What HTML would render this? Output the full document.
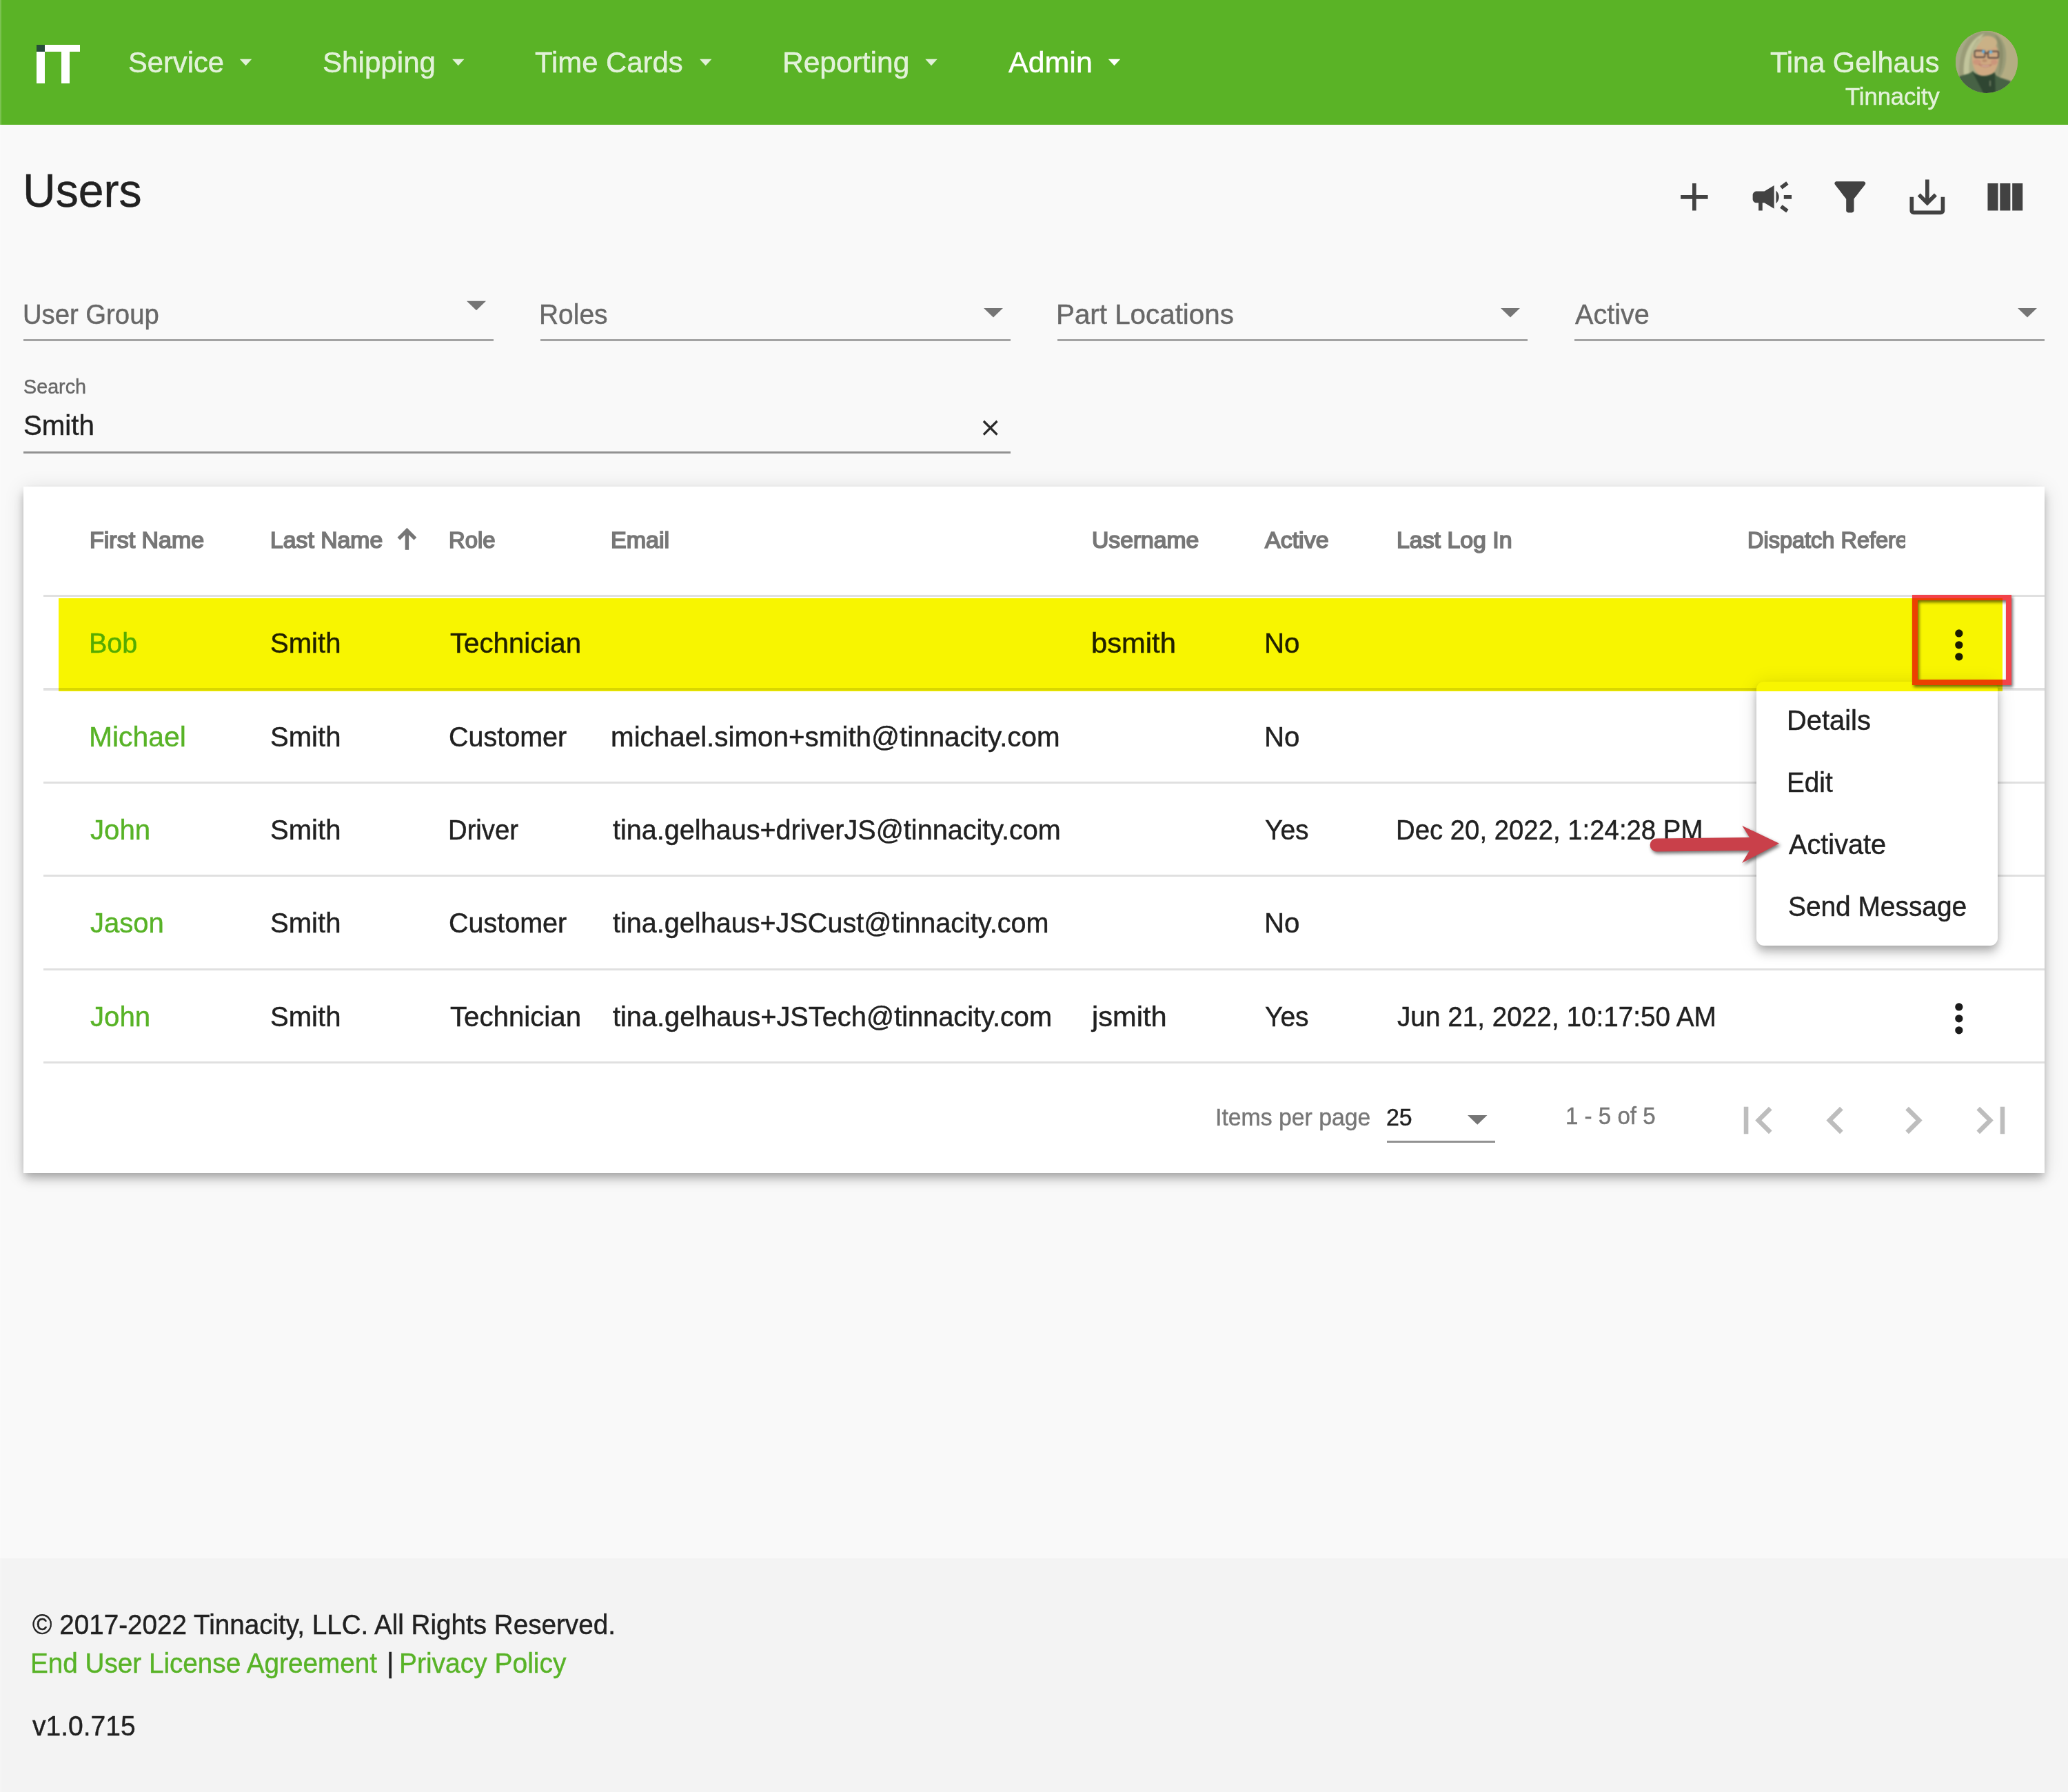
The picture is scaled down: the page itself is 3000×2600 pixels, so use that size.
<!DOCTYPE html>
<html lang="en">
<head>
<meta charset="utf-8">
<title>Users</title>
<style>
html,body{margin:0;padding:0;}
body{width:3000px;height:2600px;overflow:hidden;background:#f9f9f9;font-family:"Liberation Sans",sans-serif;}
#page{position:relative;width:3000px;height:2600px;overflow:hidden;background:#f9f9f9;}
.t{position:absolute;white-space:nowrap;line-height:1em;transform-origin:0 0;font-family:"Liberation Sans",sans-serif;}
.a{position:absolute;}
.ln{position:absolute;background:#e0e0e0;height:3.4px;left:63px;width:2903px;}
.ul{position:absolute;background:#929292;height:2.8px;}
svg{position:absolute;overflow:visible;}
</style>
</head>
<body>
<div id="page">

<!-- header -->
<div class="a" style="left:0;top:0;width:3000px;height:180.8px;background:#5ab326"></div>
<!-- logo -->
<div class="a" style="left:52.7px;top:65.3px;width:12.1px;height:10.1px;background:#264d3a"></div>
<div class="a" style="left:52.7px;top:75.4px;width:12.1px;height:45.5px;background:#fff"></div>
<div class="a" style="left:64.8px;top:65.3px;width:51.2px;height:10.1px;background:#fff"></div>
<div class="a" style="left:89px;top:65.3px;width:11.6px;height:55.6px;background:#fff"></div>
<!-- nav carets -->
<svg style="left:0;top:0" width="3000" height="181">
 <g fill="rgba(255,255,255,.82)">
  <polygon points="347.8,85.8 365.2,85.8 356.50,95.2"/>
  <polygon points="656.1,85.8 673.5,85.8 664.80,95.2"/>
  <polygon points="1015,85.8 1032.4,85.8 1023.70,95.2"/>
  <polygon points="1342.3,85.8 1359.7,85.8 1351.00,95.2"/>
 </g>
 <polygon fill="#fff" points="1607.8,85.8 1625.2,85.8 1616.50,95.2"/>
</svg>
<!-- avatar -->
<div class="a" style="left:2837px;top:44.8px;width:90px;height:90px;border-radius:50%;overflow:hidden;background:#b4ad83">
<svg style="left:0;top:0;filter:blur(1.1px)" width="90" height="90" viewBox="0 0 90 90">
 <g>
  <rect x="-6" y="-6" width="102" height="102" fill="#b4ad83"/>
  <rect x="-6" y="-6" width="34" height="102" fill="#a6aa86"/>
  <path d="M6 78 C2 44 10 10 32 2 C52 -4 70 6 73 30 C74 46 71 58 64 68 L22 74 Z" fill="#9a9c78"/>
  <path d="M12 64 C10 38 18 12 42 3 C30 16 25 34 26 64 Z" fill="#c2c59c"/>
  <path d="M20 66 C18 44 22 22 34 10 C28 26 28 46 30 66 Z" fill="#a9ac86"/>
  <ellipse cx="43" cy="38" rx="19.500" ry="29" fill="#cfa982"/>
  <ellipse cx="46" cy="17" rx="14" ry="10" fill="#cab186"/>
  <path d="M57 5 C72 14 72 46 62 66 C65 46 65 22 57 5Z" fill="#8c8e6b"/>
  <path d="M24 30 C26 18 34 10 44 8 C36 14 30 22 26 36 Z" fill="#b9bb93"/>
  <ellipse cx="31" cy="45" rx="6" ry="4" fill="#cc967b"/>
  <ellipse cx="56" cy="45" rx="5" ry="4" fill="#cc967b"/>
  <g fill="none" stroke="#5b4a42" stroke-width="1.800"><rect x="27.500" y="28.500" width="15" height="9.500" rx="2"/><rect x="47" y="29.500" width="15" height="9.500" rx="2"/><path d="M42.500 32 L47 32.500"/></g>
  <rect x="38.500" y="27.500" width="3.500" height="4.500" fill="#5aaee8"/><rect x="49" y="28.500" width="4" height="4" fill="#62b4e6"/>
  <path d="M33.500 48.500 Q43 55.500 52.500 49 Q43 51.500 33.500 48.500Z" fill="#f1e7dc" stroke="#b46f60" stroke-width="1"/>
  <ellipse cx="42" cy="43" rx="3.500" ry="2" fill="#b98d6c"/>
  <path d="M-4 96 L5 66 C12 63 20 63 25 58 C30 66 46 68 56 60 C58 68 70 68 80 73 L96 96 Z" fill="#476245"/>
  <path d="M24 58 C32 67 48 68 57 60 L58 96 L42 96 C38 82 30 72 24 58Z" fill="#2f4632"/>
  <rect x="49" y="72" width="2" height="8" fill="#6b7a5e"/>
 </g>
</svg>
</div>
<!-- toolbar icons -->
<svg style="left:2423.9px;top:251.8px" width="67.7" height="67.7" viewBox="0 0 24 24" fill="#424242"><path d="M19 13h-6v6h-2v-6H5v-2h6V5h2v6h6v2z"/></svg>
<svg style="left:2536.7px;top:251.8px" width="67.7" height="67.7" viewBox="0 0 24 24" fill="#424242"><path d="M18 11v2h4v-2h-4zm-2 6.610c.96.71 2.210 1.650 3.200 2.390.4-.530.8-1.070 1.200-1.600-.990-.740-2.240-1.680-3.200-2.400-.4.540-.8 1.080-1.200 1.610zM20.400 5.600c-.4-.530-.8-1.070-1.200-1.600-.990.740-2.240 1.680-3.200 2.400.4.530.8 1.070 1.200 1.600.960-.720 2.210-1.650 3.200-2.400zM4 9c-1.100 0-2 .9-2 2v2c0 1.100.9 2 2 2h1v4h2v-4h1l5 3V6L8 9H4zm11.500 3c0-1.330-.580-2.530-1.500-3.350v6.690c.920-.810 1.500-2.010 1.500-3.340z"/></svg>
<svg style="left:2649.5px;top:251.8px" width="67.7" height="67.7" viewBox="0 0 24 24" fill="#424242"><path d="M4.250 5.610C6.270 8.200 10 13 10 13v6c0 .550.450 1 1 1h2c.550 0 1-.450 1-1v-6s3.720-4.800 5.740-7.390A.998.998 0 0 0 18.950 4H5.040c-.830 0-1.300.950-.790 1.610z"/></svg>
<svg style="left:2762.2px;top:251.8px" width="67.7" height="67.7" viewBox="0 0 24 24" fill="#424242"><path d="M19 12v7H5v-7H3v7c0 1.100.9 2 2 2h14c1.100 0 2-.9 2-2v-7h-2zm-6 .670l2.590-2.580L17 11.500l-5 5-5-5 1.410-1.410L11 12.670V3h2v9.670z"/></svg>
<svg style="left:2875px;top:251.8px" width="67.7" height="67.7" viewBox="0 0 24 24" fill="#424242"><path d="M14.670 5v14H9.330V5h5.340zm1 14H21V5h-5.330v14zm-7.340 0V5H3v14h5.330z"/></svg>
<!-- filter underlines + carets -->
<div class="ul" style="left:34px;top:492.2px;width:682px;background:#a3a3a3"></div>
<div class="ul" style="left:784px;top:492.2px;width:682px;background:#a3a3a3"></div>
<div class="ul" style="left:1534px;top:492.2px;width:682px;background:#a3a3a3"></div>
<div class="ul" style="left:2284px;top:492.2px;width:682px;background:#a3a3a3"></div>
<div class="ul" style="left:34px;top:655px;width:1432px;height:3px"></div>
<svg style="left:0;top:400px" width="3000" height="300">
 <g fill="#757575">
  <polygon points="677,36.8 705,36.8 691,50.2"/>
  <polygon points="1427,47 1455,47 1441,60.4"/>
  <polygon points="2177,47 2205,47 2191,60.4"/>
  <polygon points="2927,47 2955,47 2941,60.4"/>
 </g>
 <g stroke="#2a2a2a" stroke-width="3.3" fill="none"><path d="M1426.9 211 L1446.5 230.6 M1446.5 211 L1426.9 230.6"/></g>
</svg>
<!-- card -->
<div class="a" style="left:33.9px;top:706px;width:2932.3px;height:996px;background:#fff;box-shadow:0 5.6px 11.3px -2.8px rgba(0,0,0,.2),0 11.3px 14.1px 0 rgba(0,0,0,.14),0 2.8px 28.2px 0 rgba(0,0,0,.12)"></div>
<div class="ln" style="top:862.8px"></div>
<div class="ln" style="top:998.3px"></div>
<div class="ln" style="top:1133.7px"></div>
<div class="ln" style="top:1269.1px"></div>
<div class="ln" style="top:1404.5px"></div>
<div class="ln" style="top:1539.9px"></div>
<!-- sort arrow -->
<svg style="left:570px;top:760px" width="45" height="45"><g stroke="#757575" stroke-width="5.4" fill="none"><path d="M20.4 37.8 V10.5"/><path d="M8.4 21.6 L20.4 9.600 L32.4 21.6" stroke-linejoin="miter"/></g></svg>
<!-- more_vert icons -->
<svg style="left:2808.4px;top:901.5px" width="67.7" height="67.7" viewBox="0 0 24 24" fill="#1b1b1b"><circle cx="12" cy="6" r="2"/><circle cx="12" cy="12" r="2"/><circle cx="12" cy="18" r="2"/></svg>
<svg style="left:2808px;top:1443.5px" width="67.7" height="67.7" viewBox="0 0 24 24" fill="#1b1b1b"><circle cx="12" cy="6" r="2"/><circle cx="12" cy="12" r="2"/><circle cx="12" cy="18" r="2"/></svg>
<!-- paginator -->
<div class="ul" style="left:2012px;top:1654.9px;width:157px"></div>
<svg style="left:2129.2px;top:1618px" width="29" height="14"><polygon fill="#757575" points="0,0 28.5,0 14.25,13.8"/></svg>
<svg style="left:2509.5px;top:1585.7px" width="79" height="79" viewBox="0 0 24 24" fill="#bdbdbd"><path d="M18.410 16.590L13.820 12l4.590-4.590L17 6l-6 6 6 6zM6 6h2v12H6z"/></svg>
<svg style="left:2623.4px;top:1585.7px" width="79" height="79" viewBox="0 0 24 24" fill="#bdbdbd"><path d="M15.410 7.410L14 6l-6 6 6 6 1.410-1.410L10.830 12z"/></svg>
<svg style="left:2735.500px;top:1585.7px" width="79" height="79" viewBox="0 0 24 24" fill="#bdbdbd"><path d="M10 6L8.590 7.410 13.170 12l-4.580 4.590L10 18l6-6z"/></svg>
<svg style="left:2848.600px;top:1585.7px" width="79" height="79" viewBox="0 0 24 24" fill="#bdbdbd"><path d="M5.590 7.410L10.180 12l-4.590 4.590L7 18l6-6-6-6zM16 6h2v12h-2z"/></svg>
<!-- footer -->
<div class="a" style="left:0;top:2260.8px;width:3000px;height:339.2px;background:#f3f3f3"></div>

<!-- texts -->
<span class="t" style="left:185.92px;top:68.90px;font-size:43.36px;color:rgba(255,255,255,.82);transform:scaleX(0.9610);-webkit-text-stroke:0.45px rgba(255,255,255,.82);">Service</span>
<span class="t" style="left:467.61px;top:68.90px;font-size:43.36px;color:rgba(255,255,255,.82);transform:scaleX(0.9721);-webkit-text-stroke:0.45px rgba(255,255,255,.82);">Shipping</span>
<span class="t" style="left:775.77px;top:68.90px;font-size:43.36px;color:rgba(255,255,255,.82);transform:scaleX(0.9653);-webkit-text-stroke:0.45px rgba(255,255,255,.82);">Time Cards</span>
<span class="t" style="left:1134.51px;top:68.90px;font-size:43.36px;color:rgba(255,255,255,.82);transform:scaleX(0.9801);-webkit-text-stroke:0.45px rgba(255,255,255,.82);">Reporting</span>
<span class="t" style="left:1462.82px;top:68.90px;font-size:43.36px;color:#fff;transform:scaleX(0.9908);-webkit-text-stroke:0.45px #fff;">Admin</span>
<span class="t" style="left:2568.28px;top:68.90px;font-size:43.36px;color:rgba(255,255,255,.82);transform:scaleX(0.9584);-webkit-text-stroke:0.45px rgba(255,255,255,.82);">Tina Gelhaus</span>
<span class="t" style="left:2676.79px;top:123.07px;font-size:34.64px;color:rgba(255,255,255,.82);transform:scaleX(0.9967);-webkit-text-stroke:0.45px rgba(255,255,255,.82);">Tinnacity</span>
<span class="t" style="left:32.69px;top:241.86px;font-size:69.39px;color:#212121;transform:scaleX(0.9528);-webkit-text-stroke:0.45px #212121;">Users</span>
<span class="t" style="left:32.63px;top:435.93px;font-size:40.49px;color:#686868;transform:scaleX(0.9447);-webkit-text-stroke:0.45px #686868;">User Group</span>
<span class="t" style="left:781.98px;top:435.93px;font-size:40.49px;color:#686868;transform:scaleX(0.9613);-webkit-text-stroke:0.45px #686868;">Roles</span>
<span class="t" style="left:1531.87px;top:435.93px;font-size:40.49px;color:#686868;transform:scaleX(0.9963);-webkit-text-stroke:0.45px #686868;">Part Locations</span>
<span class="t" style="left:2285.03px;top:435.93px;font-size:40.49px;color:#686868;transform:scaleX(0.9773);-webkit-text-stroke:0.45px #686868;">Active</span>
<span class="t" style="left:34.13px;top:546.32px;font-size:30.34px;color:#686868;transform:scaleX(0.9473);-webkit-text-stroke:0.45px #686868;">Search</span>
<span class="t" style="left:33.77px;top:597.33px;font-size:40.49px;color:#212121;transform:scaleX(0.9940);-webkit-text-stroke:0.45px #212121;">Smith</span>
<span class="t" style="left:129.79px;top:766.60px;font-size:33.43px;color:#777777;transform:scaleX(1.0170);-webkit-text-stroke:1.7px #777777;">First Name</span>
<span class="t" style="left:391.71px;top:766.60px;font-size:33.43px;color:#777777;transform:scaleX(1.0102);-webkit-text-stroke:1.7px #777777;">Last Name</span>
<span class="t" style="left:651.28px;top:766.60px;font-size:33.43px;color:#777777;transform:scaleX(0.9832);-webkit-text-stroke:1.7px #777777;">Role</span>
<span class="t" style="left:886.39px;top:766.60px;font-size:33.43px;color:#777777;transform:scaleX(1.0193);-webkit-text-stroke:1.7px #777777;">Email</span>
<span class="t" style="left:1583.84px;top:766.60px;font-size:33.43px;color:#777777;transform:scaleX(1.0075);-webkit-text-stroke:1.7px #777777;">Username</span>
<span class="t" style="left:1835.45px;top:766.60px;font-size:33.43px;color:#777777;transform:scaleX(1.0169);-webkit-text-stroke:1.7px #777777;">Active</span>
<span class="t" style="left:2025.90px;top:766.60px;font-size:33.43px;color:#777777;transform:scaleX(1.0134);-webkit-text-stroke:1.7px #777777;">Last Log In</span>
<div style="position:absolute;left:2534.80px;top:756.60px;width:229.00px;height:50.15px;overflow:hidden"><span class="t" style="left:0.31px;top:10px;font-size:33.43px;color:#777777;transform:scaleX(0.9720);font-weight:400;-webkit-text-stroke:1.7px #777777;">Dispatch Reference</span></div>
<span class="t" style="left:128.94px;top:913.13px;font-size:40.49px;color:#58b327;transform:scaleX(0.9764);-webkit-text-stroke:0.45px #58b327;">Bob</span>
<span class="t" style="left:392.47px;top:913.13px;font-size:40.49px;color:#212121;transform:scaleX(0.9900);-webkit-text-stroke:0.45px #212121;">Smith</span>
<span class="t" style="left:652.60px;top:913.13px;font-size:40.49px;color:#212121;transform:scaleX(0.9934);-webkit-text-stroke:0.45px #212121;">Technician</span>
<span class="t" style="left:1582.72px;top:913.13px;font-size:40.49px;color:#212121;transform:scaleX(1.0306);-webkit-text-stroke:0.45px #212121;">bsmith</span>
<span class="t" style="left:1833.68px;top:913.13px;font-size:40.49px;color:#212121;transform:scaleX(0.9957);-webkit-text-stroke:0.45px #212121;">No</span>
<span class="t" style="left:128.83px;top:1048.53px;font-size:40.49px;color:#58b327;transform:scaleX(1.0095);-webkit-text-stroke:0.45px #58b327;">Michael</span>
<span class="t" style="left:392.47px;top:1048.53px;font-size:40.49px;color:#212121;transform:scaleX(0.9900);-webkit-text-stroke:0.45px #212121;">Smith</span>
<span class="t" style="left:651.37px;top:1048.53px;font-size:40.49px;color:#212121;transform:scaleX(0.9755);-webkit-text-stroke:0.45px #212121;">Customer</span>
<span class="t" style="left:886.40px;top:1048.53px;font-size:40.49px;color:#212121;transform:scaleX(0.9972);-webkit-text-stroke:0.45px #212121;">michael.simon+smith@tinnacity.com</span>
<span class="t" style="left:1833.68px;top:1048.53px;font-size:40.49px;color:#212121;transform:scaleX(0.9957);-webkit-text-stroke:0.45px #212121;">No</span>
<span class="t" style="left:131.40px;top:1183.93px;font-size:40.49px;color:#58b327;transform:scaleX(0.9925);-webkit-text-stroke:0.45px #58b327;">John</span>
<span class="t" style="left:392.47px;top:1183.93px;font-size:40.49px;color:#212121;transform:scaleX(0.9900);-webkit-text-stroke:0.45px #212121;">Smith</span>
<span class="t" style="left:650.24px;top:1183.93px;font-size:40.49px;color:#212121;transform:scaleX(0.9450);-webkit-text-stroke:0.45px #212121;">Driver</span>
<span class="t" style="left:888.92px;top:1183.93px;font-size:40.49px;color:#212121;transform:scaleX(0.9775);-webkit-text-stroke:0.45px #212121;">tina.gelhaus+driverJS@tinnacity.com</span>
<span class="t" style="left:1834.62px;top:1183.93px;font-size:40.49px;color:#212121;transform:scaleX(0.9626);-webkit-text-stroke:0.45px #212121;">Yes</span>
<span class="t" style="left:2024.83px;top:1183.93px;font-size:40.49px;color:#212121;transform:scaleX(0.9467);-webkit-text-stroke:0.45px #212121;">Dec 20, 2022, 1:24:28 PM</span>
<span class="t" style="left:131.40px;top:1319.33px;font-size:40.49px;color:#58b327;transform:scaleX(0.9878);-webkit-text-stroke:0.45px #58b327;">Jason</span>
<span class="t" style="left:392.47px;top:1319.33px;font-size:40.49px;color:#212121;transform:scaleX(0.9900);-webkit-text-stroke:0.45px #212121;">Smith</span>
<span class="t" style="left:651.37px;top:1319.33px;font-size:40.49px;color:#212121;transform:scaleX(0.9755);-webkit-text-stroke:0.45px #212121;">Customer</span>
<span class="t" style="left:888.92px;top:1319.33px;font-size:40.49px;color:#212121;transform:scaleX(0.9778);-webkit-text-stroke:0.45px #212121;">tina.gelhaus+JSCust@tinnacity.com</span>
<span class="t" style="left:1833.68px;top:1319.33px;font-size:40.49px;color:#212121;transform:scaleX(0.9957);-webkit-text-stroke:0.45px #212121;">No</span>
<span class="t" style="left:131.40px;top:1454.73px;font-size:40.49px;color:#58b327;transform:scaleX(0.9925);-webkit-text-stroke:0.45px #58b327;">John</span>
<span class="t" style="left:392.47px;top:1454.73px;font-size:40.49px;color:#212121;transform:scaleX(0.9900);-webkit-text-stroke:0.45px #212121;">Smith</span>
<span class="t" style="left:652.60px;top:1454.73px;font-size:40.49px;color:#212121;transform:scaleX(0.9934);-webkit-text-stroke:0.45px #212121;">Technician</span>
<span class="t" style="left:888.92px;top:1454.73px;font-size:40.49px;color:#212121;transform:scaleX(0.9815);-webkit-text-stroke:0.45px #212121;">tina.gelhaus+JSTech@tinnacity.com</span>
<span class="t" style="left:1584.32px;top:1454.73px;font-size:40.49px;color:#212121;transform:scaleX(1.0271);-webkit-text-stroke:0.45px #212121;">jsmith</span>
<span class="t" style="left:1834.62px;top:1454.73px;font-size:40.49px;color:#212121;transform:scaleX(0.9626);-webkit-text-stroke:0.45px #212121;">Yes</span>
<span class="t" style="left:2027.22px;top:1454.73px;font-size:40.49px;color:#212121;transform:scaleX(0.9563);-webkit-text-stroke:0.45px #212121;">Jun 21, 2022, 10:17:50 AM</span>
<span class="t" style="left:1762.68px;top:1604.47px;font-size:34.64px;color:#777;transform:scaleX(0.9756);-webkit-text-stroke:0.45px #777;">Items per page</span>
<span class="t" style="left:2011.44px;top:1604.47px;font-size:34.64px;color:#212121;transform:scaleX(0.9787);-webkit-text-stroke:0.45px #212121;">25</span>
<span class="t" style="left:2270.96px;top:1602.27px;font-size:34.64px;color:#777;transform:scaleX(0.9556);-webkit-text-stroke:0.45px #777;">1 - 5 of 5</span>
<span class="t" style="left:46.73px;top:2336.93px;font-size:40.49px;color:#212121;transform:scaleX(0.9542);-webkit-text-stroke:0.45px #212121;">© 2017-2022 Tinnacity, LLC. All Rights Reserved.</span>
<span class="t" style="left:43.70px;top:2392.63px;font-size:40.49px;color:#58b327;transform:scaleX(0.9551);-webkit-text-stroke:0.45px #58b327;">End User License Agreement</span>
<span class="t" style="left:561.06px;top:2392.63px;font-size:40.49px;color:#212121;transform:scaleX(1.0000);-webkit-text-stroke:0.45px #212121;">|</span>
<span class="t" style="left:578.98px;top:2392.63px;font-size:40.49px;color:#58b327;transform:scaleX(0.9624);-webkit-text-stroke:0.45px #58b327;">Privacy Policy</span>
<span class="t" style="left:46.73px;top:2483.53px;font-size:40.49px;color:#212121;transform:scaleX(0.9633);-webkit-text-stroke:0.45px #212121;">v1.0.715</span>
<!-- menu -->
<div class="a" style="left:2548px;top:989.4px;width:350px;height:383px;background:#fff;border-radius:11px;box-shadow:0 5.6px 11.3px -2.8px rgba(0,0,0,.2),0 11.3px 14px 0 rgba(0,0,0,.14),0 2.8px 28px 0 rgba(0,0,0,.12)"></div>
<span class="t" style="left:2592.31px;top:1024.83px;font-size:40.49px;color:#212121;transform:scaleX(0.9851);-webkit-text-stroke:0.45px #212121;">Details</span>
<span class="t" style="left:2592.40px;top:1115.03px;font-size:40.49px;color:#212121;transform:scaleX(0.9552);-webkit-text-stroke:0.45px #212121;">Edit</span>
<span class="t" style="left:2595.42px;top:1205.23px;font-size:40.49px;color:#212121;transform:scaleX(0.9801);-webkit-text-stroke:0.45px #212121;">Activate</span>
<span class="t" style="left:2594.21px;top:1295.43px;font-size:40.49px;color:#212121;transform:scaleX(0.9595);-webkit-text-stroke:0.45px #212121;">Send Message</span>
<!-- arrow -->
<svg style="left:2380px;top:1180px;filter:drop-shadow(2px 3.500px 2.500px rgba(0,0,0,.55))" width="220" height="90" viewBox="2380 1180 220 90"><path fill="#c9404a" d="M2403,1216.600 L2538,1215 L2527.200,1198 L2581,1223.800 L2527.200,1252 L2538,1234 L2403,1235.400 A9.400,9.400 0 0 1 2403,1216.600 Z"/></svg>
<!-- red box -->
<div class="a" style="left:2774px;top:863px;width:128px;height:115px;border:8px solid #f2424a;filter:drop-shadow(2px 3px 2px rgba(0,0,0,.55))"></div>
<!-- yellow highlight -->
<div class="a" style="left:84.600px;top:868px;width:2820.400px;height:134.600px;background:#f8f500;mix-blend-mode:multiply"></div>

<!-- edge strip -->
<div class="a" style="left:0;top:0;width:2px;height:2600px;background:rgba(255,255,255,.2)"></div>

</div>
</body>
</html>
